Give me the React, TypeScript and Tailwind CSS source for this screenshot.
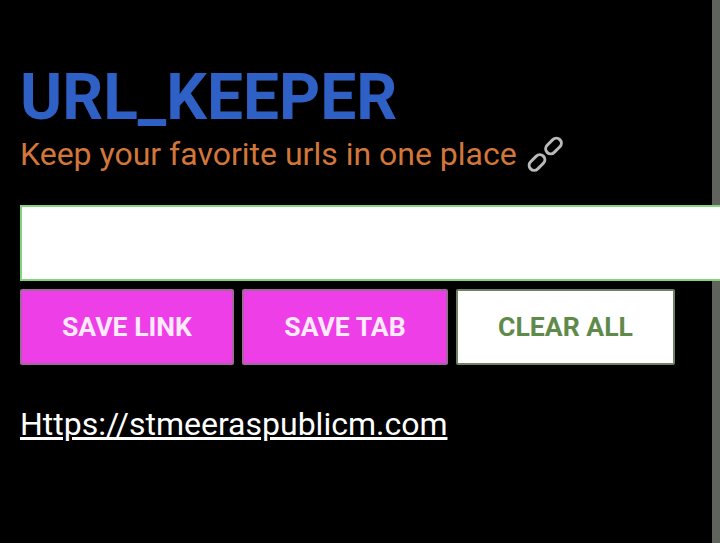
export default function App() {
  return (
    <div className="relative h-[543px] w-[720px] overflow-hidden bg-black pl-5 pt-[63px] font-['Roboto',sans-serif]">
      {/* scrollbar strip, the input runs over it */}
      <div className="absolute right-0 top-0 h-full w-2 bg-[#5f635c]" />

      <h1 className="text-[64px] font-bold leading-[69px] text-[#2f60c6]">URL_KEEPER</h1>
      <div className="flex items-center gap-[9px] text-[32px] leading-[44px] text-[#d2763a]">
        <span>Keep your favorite urls in one place</span>
        <svg width="38" height="38" viewBox="0 0 38 38" fill="none" stroke="#b9b9b9" strokeWidth="3">
          <rect x="22.5" y="2" width="10" height="18" rx="5" transform="rotate(45 27.5 11)" />
          <rect x="6" y="18.5" width="10" height="18" rx="5" transform="rotate(45 11 27.5)" />
        </svg>
      </div>

      <input
        type="text"
        className="relative z-10 mt-[29px] block h-[76px] w-[720px] border-2 border-[#84d47c] bg-white outline-none"
      />

      <div className="mt-2 flex gap-2">
        <button className="h-[76px] w-[214px] rounded-[2px] border-2 border-[#a0689a] bg-[#ee3ee8] text-[26.6px] font-bold text-[#fdeafc]">
          SAVE LINK
        </button>
        <button className="h-[76px] w-[206px] rounded-[2px] border-2 border-[#a0689a] bg-[#ee3ee8] text-[26.6px] font-bold text-[#fdeafc]">
          SAVE TAB
        </button>
        <button className="h-[76px] w-[219px] rounded-[2px] border-2 border-[#6f8266] bg-white text-[26.6px] font-bold text-[#5f8a4a]">
          CLEAR ALL
        </button>
      </div>

      <a className="mt-[37px] block text-[32px] leading-[44px] text-white underline">Https://stmeeraspublicm.com</a>
    </div>
  );
}
